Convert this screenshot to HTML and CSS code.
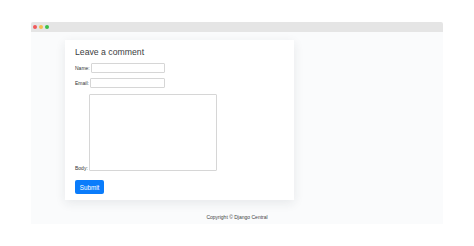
FILE: index.html
```html
<!DOCTYPE html>
<html lang="en">
<head>
<meta charset="utf-8">
<title>Leave a comment</title>
<link rel="stylesheet" href="styles.css">
</head>
<body>
<div class="stage">
  <div class="window">
    <div class="titlebar">
      <span class="dot red"></span>
      <span class="dot yellow"></span>
      <span class="dot green"></span>
    </div>
    <div class="content">
      <div class="card">
        <h3 class="card-title">Leave a comment</h3>
        <form class="comment-form">
          <p class="row"><label for="n">Name:</label><input id="n" class="field name" type="text"></p>
          <p class="row"><label for="e">Email:</label><input id="e" class="field email" type="text"></p>
          <p class="row body-row"><label for="b">Body:</label><textarea id="b" class="field body"></textarea></p>
          <button type="button" class="btn">Submit</button>
        </form>
      </div>
      <footer class="footer">Copyright © Django Central</footer>
    </div>
  </div>
</div>
</body>
</html>
```
FILE: styles.css
```css
html, body {
  margin: 0;
  padding: 0;
  background: #ffffff;
  font-family: "Liberation Sans", Arial, sans-serif;
}
.stage {
  padding: 22px 31px 0 31px;
}
.window {
  width: 412px;
}
.titlebar {
  height: 10px;
  background: #e5e5e5;
  border-radius: 2px 2px 0 0;
  display: flex;
  align-items: center;
  gap: 2px;
  padding-left: 2px;
}
.dot {
  width: 4px;
  height: 4px;
  border-radius: 50%;
  display: block;
}
.red { background: #f0595a; }
.yellow { background: #f6bd4f; }
.green { background: #3cc04a; }
.content {
  height: 192px;
  box-sizing: border-box;
  background: #fafbfc;
  padding: 8px 0 0 0;
  display: flex;
  flex-direction: column;
}
.card {
  margin-left: 34px;
  width: 229px;
  height: 160px;
  box-sizing: border-box;
  background: #ffffff;
  box-shadow: 0 3px 10px rgba(30, 40, 60, 0.09);
  padding: 7px 10px 6px 10px;
}
.card-title {
  margin: 0 0 5px 0;
  font-size: 8.7px;
  line-height: 11px;
  font-weight: 400;
  color: #3a3d41;
}
.comment-form {
  margin: 0;
}
.row {
  margin: 0 0 5px 0;
  display: flex;
  align-items: center;
  gap: 1.5px;
}
.row label {
  font-size: 5px;
  line-height: 6px;
  color: #333;
}
.body-row {
  align-items: flex-end;
  margin-top: 6px;
  margin-bottom: 0;
}
.field {
  box-sizing: border-box;
  border: 1px solid #d6d6d6;
  background: #fff;
  margin: 0;
  padding: 0;
  border-radius: 1px;
}
.name { width: 74px; height: 10px; }
.email { width: 75px; height: 10px; }
.body { width: 128px; height: 77px; resize: none; display: block; }
.btn {
  margin-top: 9px;
  width: 29px;
  height: 14px;
  box-sizing: border-box;
  border: none;
  border-radius: 2px;
  background: #0a7cfb;
  color: #ffffff;
  font-family: "Liberation Sans", Arial, sans-serif;
  font-size: 6.3px;
  padding: 0;
  display: block;
}
.footer {
  margin-top: 14px;
  text-align: center;
  font-size: 5px;
  line-height: 6px;
  color: #444;
}
```
